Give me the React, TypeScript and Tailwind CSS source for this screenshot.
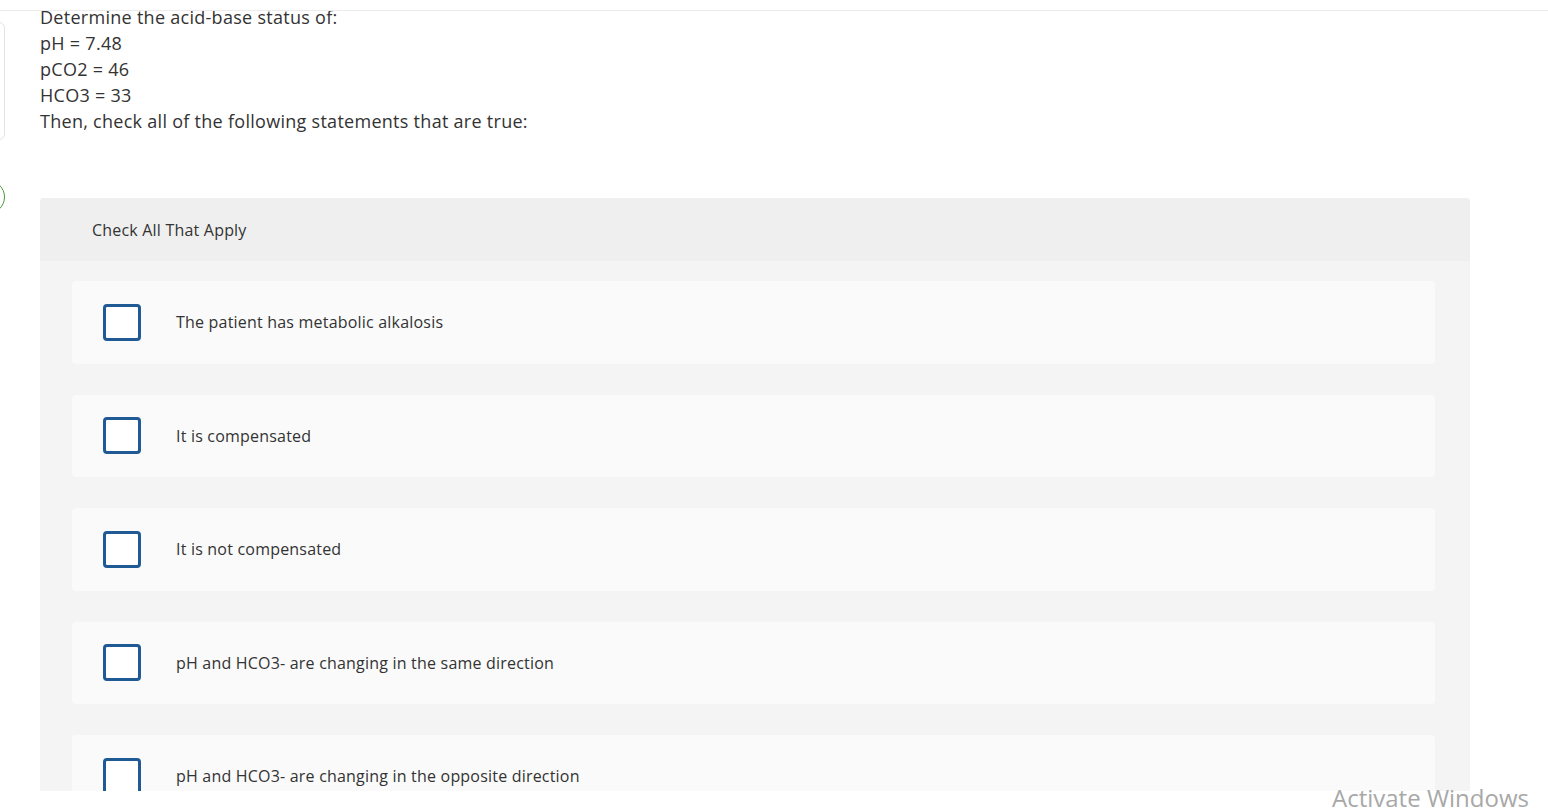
import React from "react";

const options = [
  "The patient has metabolic alkalosis",
  "It is compensated",
  "It is not compensated",
  "pH and HCO3- are changing in the same direction",
  "pH and HCO3- are changing in the opposite direction",
];

export default function App() {
  return (
    <div
      className="relative h-[809px] w-[1548px] overflow-hidden bg-white text-[#333]"
      style={{ fontFamily: "'Open Sans', 'Noto Sans', Arial, sans-serif" }}
    >
      <div className="relative z-10 h-[11px] border-b border-[#ececec] bg-white" />
      <div className="relative h-[780px] overflow-hidden">
        <div className="-mt-[7px] flex">
          <div className="w-[40px] shrink-0">
            <div className="-ml-[20px] mt-[18px] h-[118px] w-[25px] rounded-[6px] border border-[#e3e3e3] bg-white" />
            <div className="-ml-[30px] mt-[40px] h-[34px] w-[35px] rounded-full border-[1.5px] border-[#4a9a3a]" />
          </div>
          <div className="flex-1">
            <div className="pr-[78px] text-[18px] leading-[26px] tracking-[0.28px]">
              <p>Determine the acid-base status of:</p>
              <p>pH = 7.48</p>
              <p>pCO2 = 46</p>
              <p>HCO3 = 33</p>
              <p>Then, check all of the following statements that are true:</p>
            </div>
            <div className="mt-[64px] w-[1430px] overflow-hidden rounded-t-[4px] bg-[#f4f4f4]">
              <div className="flex h-[63px] items-center bg-[#efefef] pl-[52px] text-[16px] tracking-[0.2px]">
                Check All That Apply
              </div>
              <div className="flex flex-col gap-[31px] pb-[30px] pl-[32px] pr-[35px] pt-[20px]">
                {options.map((o) => (
                  <div
                    key={o}
                    className="flex h-[82.5px] items-center rounded-[4px] bg-[#fafafa] pl-[31px]"
                  >
                    <div className="h-[37px] w-[38px] shrink-0 rounded-[4px] border-[3px] border-[#1f5a94] bg-white" />
                    <span className="ml-[35px] text-[16px] tracking-[0.2px]">{o}</span>
                  </div>
                ))}
              </div>
            </div>
          </div>
        </div>
      </div>
      <div
        className="absolute left-[1332px] top-[783px] text-[24px] leading-[30px] text-[#a8a8a8]"
        style={{ fontFamily: "'Open Sans', 'Noto Sans', sans-serif" }}
      >
        Activate Windows
      </div>
    </div>
  );
}
